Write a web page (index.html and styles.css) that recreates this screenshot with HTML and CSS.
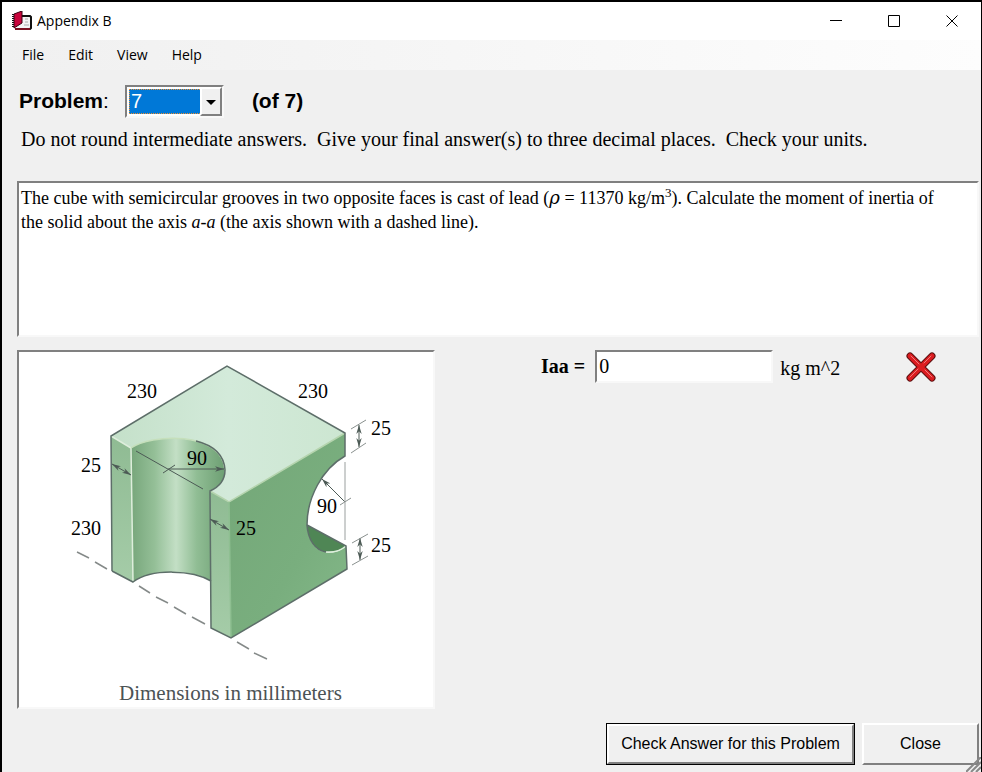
FILE: index.html
```html
<!DOCTYPE html>
<html lang="en">
<head>
    <meta charset="UTF-8">
    <meta name="viewport" content="width=device-width, initial-scale=1.0">
    <title>Appendix B</title>
    <link rel="stylesheet" href="styles.css">
</head>
<body>
    <div class="window">
        <header class="titlebar">
            <svg class="app-icon" width="20" height="20" viewBox="0 0 20 20">
                <path d="M10 5h8l1 1v11l-1 1H3" fill="#f4f4f4" stroke="#111" stroke-width="2"/>
                <path d="M13 8h3M13 11h3M12 14h5" stroke="#aaa"/>
                <path d="M3 18h15" stroke="#7a1020" stroke-width="2"/>
                <path d="M2 3l8-3v12l-8 5z" fill="#c8053c" stroke="#3a0010"/>
                <path d="M1 3v14" stroke="#111" stroke-width="2" stroke-dasharray="1 1"/>
            </svg>
            <span class="title">Appendix B</span>
            <div class="window-buttons">
                <button type="button" aria-label="Minimize">
                    <svg width="12" height="12" viewBox="0 0 12 12"><path d="M0 5.5h12" stroke="#000"/></svg>
                </button>
                <button type="button" aria-label="Maximize">
                    <svg width="12" height="12" viewBox="0 0 12 12"><path d="M.5.5h11v11H.5z" fill="none" stroke="#000"/></svg>
                </button>
                <button type="button" aria-label="Close window">
                    <svg width="12" height="12" viewBox="0 0 12 12"><path d="M.5.5l11 11M11.5.5l-11 11" stroke="#000"/></svg>
                </button>
            </div>
        </header>

        <nav class="menu">
            <button type="button">File</button>
            <button type="button">Edit</button>
            <button type="button">View</button>
            <button type="button">Help</button>
        </nav>

        <main class="content">
            <div class="problem-row">
                <label for="problem">Problem<span class="colon">:</span></label>
                <div class="combo">
                    <select id="problem">
                        <option>1</option>
                        <option>2</option>
                        <option>3</option>
                        <option>4</option>
                        <option>5</option>
                        <option>6</option>
                        <option selected>7</option>
                    </select>
                    <span class="combo-arrow"></span>
                </div>
                <span class="count">(of 7)</span>
            </div>
            <p class="instructions">Do not round intermediate answers.&nbsp; Give your final answer(s) to three decimal places.&nbsp; Check your units.</p>

            <div class="statement sunken">The cube with semicircular grooves in two opposite faces is cast of lead (<i class="rho">ρ</i> = 11370 kg/m<sup>3</sup>). Calculate the moment of inertia of<br>the solid about the axis <i>a-a</i> (the axis shown with a dashed line).</div>

            <div class="work">
                <div class="figure sunken">
                    <svg viewBox="19 352 414 355" role="img" aria-label="Cube with semicircular grooves">
                        <defs>
                            <linearGradient id="groove" x1="131" x2="225" y1="0" y2="0" gradientUnits="userSpaceOnUse">
                                <stop offset="0" stop-color="#77a67b"/>
                                <stop offset=".25" stop-color="#94bf97"/>
                                <stop offset=".48" stop-color="#c3dfc5"/>
                                <stop offset=".7" stop-color="#90bd94"/>
                                <stop offset="1" stop-color="#6d9f73"/>
                            </linearGradient>
                            <linearGradient id="top" x1="0" x2="1" y1="0" y2="0">
                                <stop offset="0" stop-color="#c4e0c9"/>
                                <stop offset=".5" stop-color="#d3eada"/>
                                <stop offset="1" stop-color="#cce6d1"/>
                            </linearGradient>
                            <linearGradient id="strip" x1="0" x2="0" y1="0" y2="1">
                                <stop offset="0" stop-color="#8fbb93"/>
                                <stop offset="1" stop-color="#a5cca8"/>
                            </linearGradient>
                            <linearGradient id="side" x1="0" x2="1" y1="0" y2="1">
                                <stop offset="0" stop-color="#74a778"/>
                                <stop offset=".6" stop-color="#79ae7e"/>
                                <stop offset="1" stop-color="#84b889"/>
                            </linearGradient>
                            <marker id="arrow" viewBox="0 0 10 6" refX="10" refY="3" markerWidth="9" markerHeight="6" markerUnits="userSpaceOnUse" orient="auto-start-reverse">
                                <path d="M0 0L10 3L0 6L3 3z" fill="#4c5a55"/>
                            </marker>
                        </defs>

                        <!-- body of the cube -->
                        <path d="M131 448C150 434 222 430 225 470C225 480 219 487 210 491L211 581C193 570 152 568 133 582z" fill="url(#groove)"/>
                        <path d="M111 436L131 448L133 582L112 571z" fill="url(#strip)"/>
                        <path d="M227 366L345 433L229 502L210 491C219 487 225 480 225 470C222 430 150 434 131 448L111 436z" fill="url(#top)"/>
                        <path d="M210 491L229 502L231 638L211 628z" fill="url(#strip)"/>
                        <path d="M307 525L346 546C338 553 310 562 307 525z" fill="#4f8655"/>
                        <path d="M229 502L345 433V456C322 469 307 498 307 525C310 560 338 555 346 546L347 569L231 638z" fill="url(#side)"/>

                        <!-- lit edges -->
                        <g fill="none" stroke="#deeedc" stroke-width="1.5">
                            <path d="M111 436L131 448L133 581"/>
                            <path d="M131 448C150 434 222 430 225 470" stroke="#c5dfbb"/>
                            <path d="M210 491L229 502L345 433" stroke="#b5d4ae"/>
                            <path d="M229 502L231 637" stroke="#8ebf91"/>
                            <path d="M326 552Q338 553 346 546"/>
                        </g>

                        <!-- outline -->
                        <g fill="none" stroke="#5d6e69" stroke-width="1.5">
                            <path d="M112 571L111 436L227 366L345 433V456C322 469 307 498 307 525C308 540 315 550 326 552"/>
                            <path d="M112 571L133 582C152 568 193 570 211 581"/>
                            <path d="M196 441C212 445 224 454 225 470C225 480 219 487 210 491L211 628L231 638L347 569L346 546L307 525"/>
                        </g>

                        <!-- dimension lines -->
                        <g fill="none" stroke="#4c5a55">
                            <path d="M136 451L203 489M163 473L175 465"/>
                            <path d="M168 469H224" marker-end="url(#arrow)"/>
                            <path d="M112 464L131 475" marker-start="url(#arrow)" marker-end="url(#arrow)"/>
                            <path d="M210 519L229 530" marker-start="url(#arrow)" marker-end="url(#arrow)"/>
                            <path d="M345 502L322 479" marker-end="url(#arrow)"/>
                            <path d="M359 425V447" marker-start="url(#arrow)" marker-end="url(#arrow)"/>
                            <path d="M360 538V560" marker-start="url(#arrow)" marker-end="url(#arrow)"/>
                            <path d="M351 429L366 420M351 453L366 443M352 543L368 534M352 565L368 556M340 505L351 498" stroke="#8a918f"/>
                            <path d="M345 462V540" stroke="#9a9f9e"/>
                        </g>

                        <!-- axis a-a -->
                        <path d="M77 552L89 558M95 562L107 569M139 586L150 593M156 597L168 603M174 607L186 614M192 617L205 624M237 642L249 649M254 653L267 659" stroke="#858a89" stroke-width="1.5"/>

                        <g class="dims">
                            <text x="127" y="398">230</text>
                            <text x="298" y="398">230</text>
                            <text x="371" y="435">25</text>
                            <text x="81" y="472">25</text>
                            <text x="187" y="465">90</text>
                            <text x="317" y="513">90</text>
                            <text x="71" y="535">230</text>
                            <text x="236" y="535">25</text>
                            <text x="371" y="552">25</text>
                        </g>
                        <text class="caption" x="119" y="700">Dimensions in millimeters</text>
                    </svg>
                </div>

                <div class="answer">
                    <label for="iaa">Iaa =</label>
                    <input class="sunken" id="iaa" type="text" value="0">
                    <span class="unit">kg m^2</span>
                    <svg class="wrong" width="30" height="30" viewBox="0 0 30 30" role="img" aria-label="Incorrect">
                        <path d="M4 4L26 26M26 4L4 26" stroke="#5c1010" stroke-width="7" stroke-linecap="round"/>
                        <path d="M4 4L26 26M26 4L4 26" stroke="#dc1c20" stroke-width="5" stroke-linecap="round"/>
                        <path d="M5 4L13 12M25 4L18 11M12 17L4 25M19 18L26 25" stroke="#ee7c7c" stroke-linecap="round"/>
                    </svg>
                </div>
            </div>

            <div class="actions">
                <button type="button" class="btn default">Check Answer for this Problem</button>
                <button type="button" class="btn close">Close</button>
            </div>
        </main>
        <svg class="grip" width="15" height="15" viewBox="0 0 15 15"><path d="M0 15L15 0M5 15L15 5M10 15L15 10" stroke="#888" stroke-width="2"/></svg>
    </div>
</body>
</html>
```
FILE: styles.css
```css
* {
    box-sizing: border-box;
}
body {
    margin: 0;
    color: #000;
    font-family: "Liberation Sans", Arial, sans-serif;
}
button {
    font: inherit;
    color: inherit;
    padding: 0;
    border: none;
    background: none;
}
.window {
    position: relative;
    display: flex;
    flex-direction: column;
    min-height: 100vh;
    background-color: #f0f0f0;
    border: 2px solid #000;
    border-right-width: 1px;
    border-bottom: none;
}

/* Title bar and menu */
.titlebar {
    display: flex;
    align-items: center;
    height: 38px;
    padding-left: 10px;
    background-color: #fff;
    font-family: "Open Sans", "Noto Sans", sans-serif;
    font-size: 14px;
}
.title {
    margin-left: 5px;
    padding-bottom: 2px;
}
.window-buttons {
    display: flex;
    height: 100%;
    margin-left: auto;
}
.window-buttons button {
    display: flex;
    align-items: center;
    justify-content: center;
    width: 58px;
}
.menu {
    display: flex;
    gap: 24px;
    height: 30px;
    padding: 0 0 2px 20px;
    background: linear-gradient(to right, #f0f0f0, #fdfdfd);
    font-family: "Open Sans", "Noto Sans", sans-serif;
    font-size: 14px;
}

/* Content */
.content {
    display: flex;
    flex: 1;
    flex-direction: column;
    padding: 14px 2px 7px 15px;
}
.sunken {
    border: 2px solid;
    border-color: #808080 #f8f8f8 #f8f8f8 #808080;
    background-color: #fff;
}
.problem-row {
    display: flex;
    align-items: center;
    height: 34px;
    padding-left: 2px;
    font-size: 21px;
    font-weight: bold;
}
.colon {
    font-weight: normal;
}
.combo {
    position: relative;
    width: 99px;
    height: 33px;
    margin: 0 28px 0 16px;
    padding: 2px;
    border: 2px solid;
    border-color: #808080 #f8f8f8 #f8f8f8 #808080;
    background-color: #fff;
}
.combo select {
    display: block;
    appearance: none;
    width: 73px;
    height: 100%;
    padding: 0 1px;
    border: 1px dotted #f09030;
    border-radius: 0;
    background-color: #0078d7;
    color: #fff;
    font-family: inherit;
    font-size: 20px;
}
.combo-arrow {
    position: absolute;
    top: 0;
    right: 0;
    width: 22px;
    height: 100%;
    border: 2px solid;
    border-color: #fff #808080 #808080 #fff;
    background-color: #f0f0f0;
    pointer-events: none;
}
.combo-arrow::after {
    content: "";
    position: absolute;
    top: 11px;
    left: 4px;
    border: 5px solid transparent;
    border-top-color: #000;
    border-bottom: none;
}
.instructions {
    margin: 9px 0 30px 4px;
    font-family: "Liberation Serif", "Times New Roman", serif;
    font-size: 20px;
    line-height: 24px;
}
.statement {
    height: 156px;
    padding: 3px 2px;
    font-family: "Liberation Serif", "Times New Roman", serif;
    font-size: 18px;
    line-height: 24px;
}
.statement sup {
    font-size: 13px;
    line-height: 0;
}
.rho {
    font-family: "DejaVu Serif", serif;
    line-height: 0;
}
.work {
    display: flex;
    align-items: flex-start;
    margin-top: 13px;
    font-family: "Liberation Serif", "Times New Roman", serif;
    font-size: 20px;
}
.figure {
    width: 418px;
}
.figure svg {
    display: block;
    width: 100%;
}
.dims text {
    font-size: 20px;
}
.caption {
    fill: #4c5355;
    font-size: 21px;
}
.answer {
    display: flex;
    align-items: center;
    margin-left: 106px;
}
.answer label {
    font-weight: bold;
}
.answer input {
    width: 178px;
    height: 33px;
    margin-left: 10px;
    padding: 0 2px;
    font: inherit;
}
.unit {
    margin: 4px 66px 0 7px;
}

/* Bottom buttons */
.actions {
    display: flex;
    justify-content: flex-end;
    gap: 7px;
    margin-top: auto;
}
.btn {
    height: 42px;
    border: 2px solid;
    border-color: #fff #808080 #808080 #fff;
    background-color: #f0f0f0;
    font-size: 16px;
}
.btn.default {
    width: 249px;
    border-width: 3px;
    outline: 1px solid #000;
    outline-offset: -1px;
}
.btn.close {
    width: 117px;
}
.grip {
    position: absolute;
    right: 0;
    bottom: 0;
}
```
